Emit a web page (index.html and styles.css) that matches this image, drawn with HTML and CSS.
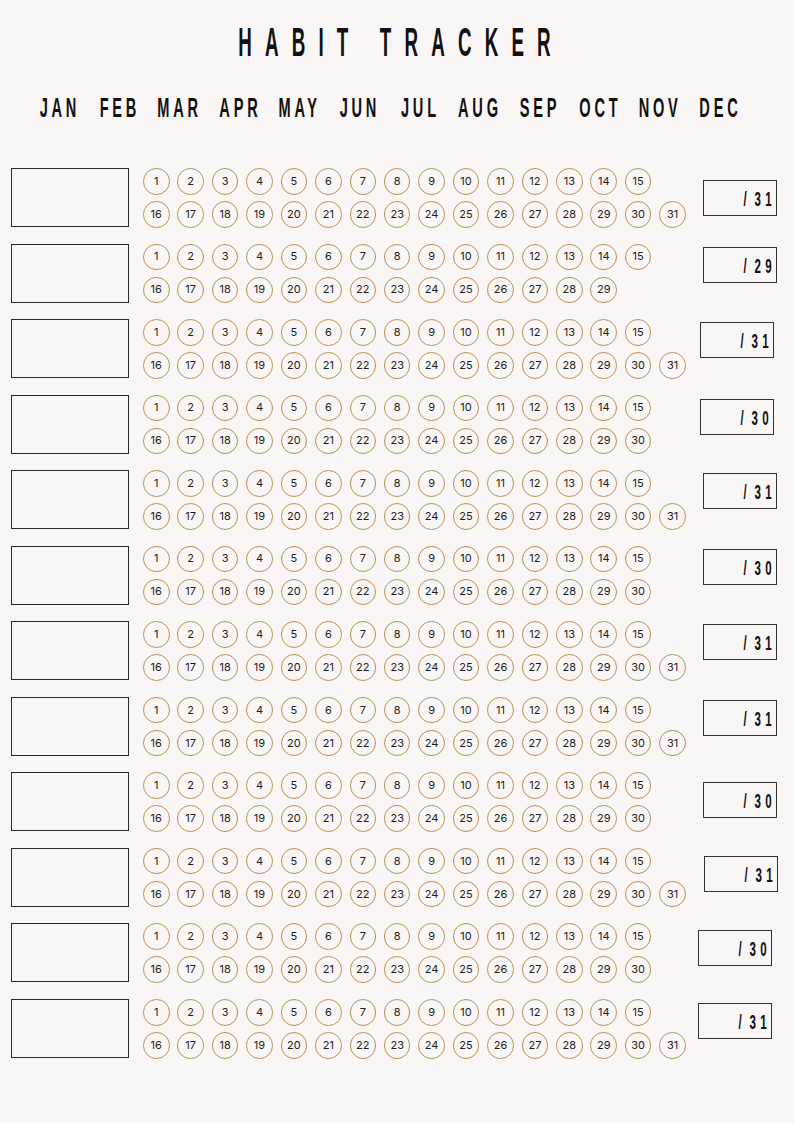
FILE: index.html
```html
<!DOCTYPE html>
<html lang="en">
<head>
<meta charset="utf-8">
<title>Habit Tracker</title>
<link rel="stylesheet" href="styles.css">
</head>
<body>
<main class="page">
  <h1 class="title"><span>HABIT TRACKER</span></h1>
  <ul class="months">
    <li><span>JAN</span></li><li><span>FEB</span></li><li><span>MAR</span></li><li><span>APR</span></li>
    <li><span>MAY</span></li><li><span>JUN</span></li><li><span>JUL</span></li><li><span>AUG</span></li>
    <li><span>SEP</span></li><li><span>OCT</span></li><li><span>NOV</span></li><li><span>DEC</span></li>
  </ul>
  <section class="rows">
    <div class="row">
      <div class="habit"></div>
      <div class="days">
        <div class="line"><span>1</span><span>2</span><span>3</span><span>4</span><span>5</span><span>6</span><span>7</span><span>8</span><span>9</span><span>10</span><span>11</span><span>12</span><span>13</span><span>14</span><span>15</span></div>
        <div class="line"><span>16</span><span>17</span><span>18</span><span>19</span><span>20</span><span>21</span><span>22</span><span>23</span><span>24</span><span>25</span><span>26</span><span>27</span><span>28</span><span>29</span><span>30</span><span>31</span></div>
      </div>
      <div class="total off-12"><span>/ 31</span></div>
    </div>
    <div class="row">
      <div class="habit"></div>
      <div class="days">
        <div class="line"><span>1</span><span>2</span><span>3</span><span>4</span><span>5</span><span>6</span><span>7</span><span>8</span><span>9</span><span>10</span><span>11</span><span>12</span><span>13</span><span>14</span><span>15</span></div>
        <div class="line"><span>16</span><span>17</span><span>18</span><span>19</span><span>20</span><span>21</span><span>22</span><span>23</span><span>24</span><span>25</span><span>26</span><span>27</span><span>28</span><span>29</span></div>
      </div>
      <div class="total"><span>/ 29</span></div>
    </div>
    <div class="row">
      <div class="habit"></div>
      <div class="days">
        <div class="line"><span>1</span><span>2</span><span>3</span><span>4</span><span>5</span><span>6</span><span>7</span><span>8</span><span>9</span><span>10</span><span>11</span><span>12</span><span>13</span><span>14</span><span>15</span></div>
        <div class="line"><span>16</span><span>17</span><span>18</span><span>19</span><span>20</span><span>21</span><span>22</span><span>23</span><span>24</span><span>25</span><span>26</span><span>27</span><span>28</span><span>29</span><span>30</span><span>31</span></div>
      </div>
      <div class="total x-700"><span>/ 31</span></div>
    </div>
    <div class="row">
      <div class="habit"></div>
      <div class="days">
        <div class="line"><span>1</span><span>2</span><span>3</span><span>4</span><span>5</span><span>6</span><span>7</span><span>8</span><span>9</span><span>10</span><span>11</span><span>12</span><span>13</span><span>14</span><span>15</span></div>
        <div class="line"><span>16</span><span>17</span><span>18</span><span>19</span><span>20</span><span>21</span><span>22</span><span>23</span><span>24</span><span>25</span><span>26</span><span>27</span><span>28</span><span>29</span><span>30</span></div>
      </div>
      <div class="total x-700 off-4"><span>/ 30</span></div>
    </div>
    <div class="row">
      <div class="habit"></div>
      <div class="days">
        <div class="line"><span>1</span><span>2</span><span>3</span><span>4</span><span>5</span><span>6</span><span>7</span><span>8</span><span>9</span><span>10</span><span>11</span><span>12</span><span>13</span><span>14</span><span>15</span></div>
        <div class="line"><span>16</span><span>17</span><span>18</span><span>19</span><span>20</span><span>21</span><span>22</span><span>23</span><span>24</span><span>25</span><span>26</span><span>27</span><span>28</span><span>29</span><span>30</span><span>31</span></div>
      </div>
      <div class="total"><span>/ 31</span></div>
    </div>
    <div class="row">
      <div class="habit"></div>
      <div class="days">
        <div class="line"><span>1</span><span>2</span><span>3</span><span>4</span><span>5</span><span>6</span><span>7</span><span>8</span><span>9</span><span>10</span><span>11</span><span>12</span><span>13</span><span>14</span><span>15</span></div>
        <div class="line"><span>16</span><span>17</span><span>18</span><span>19</span><span>20</span><span>21</span><span>22</span><span>23</span><span>24</span><span>25</span><span>26</span><span>27</span><span>28</span><span>29</span><span>30</span></div>
      </div>
      <div class="total"><span>/ 30</span></div>
    </div>
    <div class="row">
      <div class="habit"></div>
      <div class="days">
        <div class="line"><span>1</span><span>2</span><span>3</span><span>4</span><span>5</span><span>6</span><span>7</span><span>8</span><span>9</span><span>10</span><span>11</span><span>12</span><span>13</span><span>14</span><span>15</span></div>
        <div class="line"><span>16</span><span>17</span><span>18</span><span>19</span><span>20</span><span>21</span><span>22</span><span>23</span><span>24</span><span>25</span><span>26</span><span>27</span><span>28</span><span>29</span><span>30</span><span>31</span></div>
      </div>
      <div class="total"><span>/ 31</span></div>
    </div>
    <div class="row">
      <div class="habit"></div>
      <div class="days">
        <div class="line"><span>1</span><span>2</span><span>3</span><span>4</span><span>5</span><span>6</span><span>7</span><span>8</span><span>9</span><span>10</span><span>11</span><span>12</span><span>13</span><span>14</span><span>15</span></div>
        <div class="line"><span>16</span><span>17</span><span>18</span><span>19</span><span>20</span><span>21</span><span>22</span><span>23</span><span>24</span><span>25</span><span>26</span><span>27</span><span>28</span><span>29</span><span>30</span><span>31</span></div>
      </div>
      <div class="total"><span>/ 31</span></div>
    </div>
    <div class="row">
      <div class="habit"></div>
      <div class="days">
        <div class="line"><span>1</span><span>2</span><span>3</span><span>4</span><span>5</span><span>6</span><span>7</span><span>8</span><span>9</span><span>10</span><span>11</span><span>12</span><span>13</span><span>14</span><span>15</span></div>
        <div class="line"><span>16</span><span>17</span><span>18</span><span>19</span><span>20</span><span>21</span><span>22</span><span>23</span><span>24</span><span>25</span><span>26</span><span>27</span><span>28</span><span>29</span><span>30</span></div>
      </div>
      <div class="total off-10"><span>/ 30</span></div>
    </div>
    <div class="row">
      <div class="habit"></div>
      <div class="days">
        <div class="line"><span>1</span><span>2</span><span>3</span><span>4</span><span>5</span><span>6</span><span>7</span><span>8</span><span>9</span><span>10</span><span>11</span><span>12</span><span>13</span><span>14</span><span>15</span></div>
        <div class="line"><span>16</span><span>17</span><span>18</span><span>19</span><span>20</span><span>21</span><span>22</span><span>23</span><span>24</span><span>25</span><span>26</span><span>27</span><span>28</span><span>29</span><span>30</span><span>31</span></div>
      </div>
      <div class="total x-704 off-8"><span>/ 31</span></div>
    </div>
    <div class="row">
      <div class="habit"></div>
      <div class="days">
        <div class="line"><span>1</span><span>2</span><span>3</span><span>4</span><span>5</span><span>6</span><span>7</span><span>8</span><span>9</span><span>10</span><span>11</span><span>12</span><span>13</span><span>14</span><span>15</span></div>
        <div class="line"><span>16</span><span>17</span><span>18</span><span>19</span><span>20</span><span>21</span><span>22</span><span>23</span><span>24</span><span>25</span><span>26</span><span>27</span><span>28</span><span>29</span><span>30</span></div>
      </div>
      <div class="total x-698 off-7"><span>/ 30</span></div>
    </div>
    <div class="row">
      <div class="habit"></div>
      <div class="days">
        <div class="line"><span>1</span><span>2</span><span>3</span><span>4</span><span>5</span><span>6</span><span>7</span><span>8</span><span>9</span><span>10</span><span>11</span><span>12</span><span>13</span><span>14</span><span>15</span></div>
        <div class="line"><span>16</span><span>17</span><span>18</span><span>19</span><span>20</span><span>21</span><span>22</span><span>23</span><span>24</span><span>25</span><span>26</span><span>27</span><span>28</span><span>29</span><span>30</span><span>31</span></div>
      </div>
      <div class="total x-698 off-4"><span>/ 31</span></div>
    </div>
  </section>
</main>
</body>
</html>
```

FILE: styles.css
```css
* { box-sizing: border-box; }

html, body {
  margin: 0;
  padding: 0;
  background: #faf6f5;
}

body {
  width: 794px;
  min-height: 1123px;
  color: #111;
  font-family: "Liberation Sans", Arial, sans-serif;
}

.page {
  padding-top: 22px;
}

.title {
  margin: 0;
  height: 40px;
  font-size: 40px;
  line-height: 40px;
  font-weight: 700;
  text-align: center;
  white-space: nowrap;
}

.title span {
  display: inline-block;
  letter-spacing: 28px;
  padding-left: 28px;
  margin-left: -6px;
  transform: scaleX(0.47);
  transform-origin: center;
}

.months {
  list-style: none;
  margin: 33px 0 0;
  padding: 0 0 0 28px;
  display: flex;
  height: 26px;
}

.months li {
  width: 60px;
  flex: none;
  display: flex;
  justify-content: center;
  font-size: 27px;
  line-height: 26px;
  font-weight: 700;
  white-space: nowrap;
}

.months li span {
  display: inline-block;
  flex: none;
  letter-spacing: 7px;
  padding-left: 7px;
  transform: scaleX(0.54);
}

.rows {
  margin-top: 47px;
  display: flex;
  flex-direction: column;
  gap: 16.55px;
}

.row {
  display: flex;
  align-items: flex-start;
  height: 59px;
}

.habit {
  width: 118px;
  height: 59px;
  margin-left: 11px;
  border: 1.5px solid #2a2a2a;
  flex: none;
}

.days {
  margin-left: 14px;
  width: 542px;
  flex: none;
  display: flex;
  flex-direction: column;
  gap: 6.5px;
}

.line {
  display: flex;
  gap: 7.93px;
}

.line span {
  width: 26.5px;
  height: 26.5px;
  flex: none;
  border: 1.6px solid #b89255;
  border-radius: 50%;
  display: flex;
  align-items: center;
  justify-content: center;
  font-family: Inter, "Noto Sans", sans-serif;
  font-size: 11px;
  color: #1c1c1c;
  line-height: 1;
}

.total {
  width: 74px;
  height: 36px;
  margin-left: 18px;
  margin-top: 3px;
  border: 1.5px solid #333;
  flex: none;
  display: flex;
  align-items: center;
  justify-content: flex-end;
  padding: 2px 0 0 0;
  font-size: 21px;
  font-weight: 700;
  white-space: nowrap;
}

.total span {
  display: inline-block;
  letter-spacing: 8px;
  word-spacing: -8px;
  transform: scaleX(0.55);
  transform-origin: right center;
}

.total.off-12 { margin-top: 12px; }
.total.off-10 { margin-top: 10px; }
.total.off-8 { margin-top: 8px; }
.total.off-7 { margin-top: 7px; }
.total.off-4 { margin-top: 4px; }
.total.x-700 { margin-left: 15px; }
.total.x-698 { margin-left: 13px; }
.total.x-704 { margin-left: 19px; }
```
